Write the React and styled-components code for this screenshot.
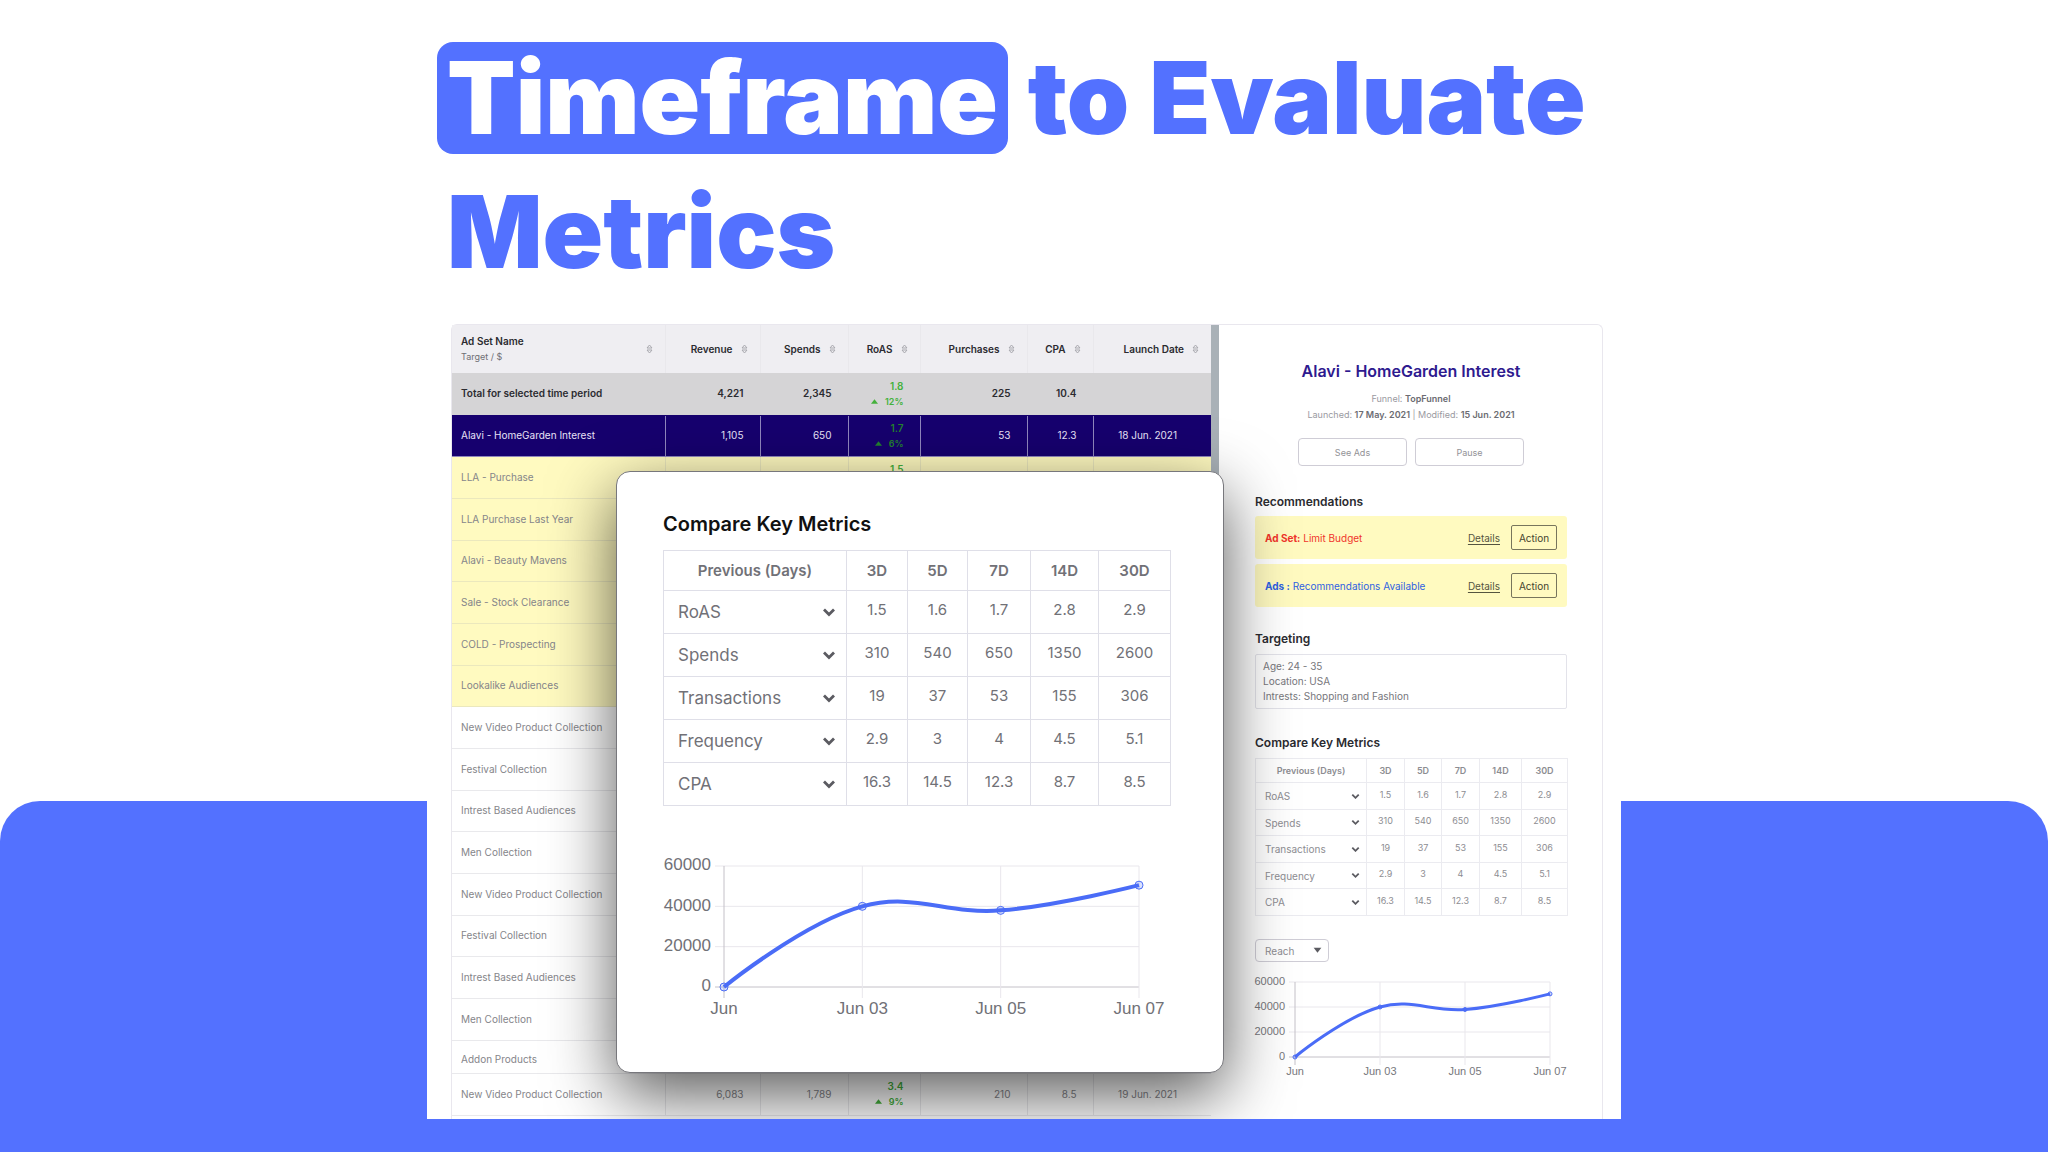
import React from 'react';
import styled, { createGlobalStyle, css } from 'styled-components';

const BLUE = '#5371ff';
const LINE = '#e3e3ea';

const COLUMNS = [
  { name: 'Revenue', width: 95 },
  { name: 'Spends', width: 88 },
  { name: 'RoAS', width: 72 },
  { name: 'Purchases', width: 107 },
  { name: 'CPA', width: 66 },
  { name: 'Launch Date', width: 118 }
];

const AD_SETS = [
  { name: 'LLA - Purchase', flagged: true, roas: '1.5', change: '5%' },
  { name: 'LLA Purchase Last Year', flagged: true },
  { name: 'Alavi - Beauty Mavens', flagged: true },
  { name: 'Sale - Stock Clearance', flagged: true },
  { name: 'COLD - Prospecting', flagged: true },
  { name: 'Lookalike Audiences', flagged: true },
  { name: 'New Video Product Collection' },
  { name: 'Festival Collection' },
  { name: 'Intrest Based Audiences' },
  { name: 'Men Collection' },
  { name: 'New Video Product Collection' },
  { name: 'Festival Collection' },
  { name: 'Intrest Based Audiences' },
  { name: 'Men Collection' }
];

const DAYS = ['3D', '5D', '7D', '14D', '30D'];
const METRICS = [
  { name: 'RoAS', values: ['1.5', '1.6', '1.7', '2.8', '2.9'] },
  { name: 'Spends', values: ['310', '540', '650', '1350', '2600'] },
  { name: 'Transactions', values: ['19', '37', '53', '155', '306'] },
  { name: 'Frequency', values: ['2.9', '3', '4', '4.5', '5.1'] },
  { name: 'CPA', values: ['16.3', '14.5', '12.3', '8.7', '8.5'] }
];

const REACH = [
  { label: 'Jun', value: 0 },
  { label: 'Jun 03', value: 40000 },
  { label: 'Jun 05', value: 38000 },
  { label: 'Jun 07', value: 50500 }
];
const TICKS = [60000, 40000, 20000, 0];

const GlobalStyle = createGlobalStyle`
  *, *::before, *::after { box-sizing: border-box; }
  body {
    margin: 0;
    background: #fff;
    font-family: Inter, "Liberation Sans", sans-serif;
  }
  button, select { font-family: inherit; }
`;

const Page = styled.main`
  display: grid;
  min-height: 100vh;
`;

const Band = styled.div`
  grid-area: 1 / 1;
  align-self: end;
  height: 351px;
  border-radius: 40px 40px 0 0;
  background: ${BLUE};
`;

const Slide = styled.section`
  grid-area: 1 / 1;
  justify-self: center;
  display: flex;
  flex-direction: column;
  width: 100%;
  max-width: 1194px;
  margin-bottom: 33px;
  padding: 31px 18px 0 24px;
  background: #fff;
`;

const Heading = styled.h1`
  margin: 0 0 25px -4px;
  color: ${BLUE};
  font-size: 100px;
  font-weight: 900;
  line-height: 134px;
`;

const Highlight = styled.span`
  display: inline-block;
  margin-left: -10px;
  padding: 0 10px;
  border-radius: 16px;
  background: ${BLUE};
  color: #fff;
  line-height: 112px;
`;

const Frame = styled.div`
  position: relative;
  flex: 1;
  display: flex;
  border: 1px solid #e9e7ee;
  border-bottom: 0;
  border-radius: 6px 6px 0 0;
`;

// the popup shadow runs past the frame, so clipping happens here
const Stage = styled.div`
  flex: 1;
  display: flex;
  margin: 0 -18px 0 -24px;
  padding: 0 18px 0 24px;
  overflow: hidden;
`;

const AdTable = styled.table`
  flex: 1;
  align-self: flex-start;
  table-layout: fixed;
  width: 0;
  border-collapse: collapse;
  color: #85858a;
  font-size: 10px;
  line-height: 15px;
`;

const HeadCell = styled.th`
  height: 48px;
  padding: 0 12px 0 9px;
  border-right: 1px solid #e9e8ec;
  background: #efeef2;
  color: #2b2b30;
  font-weight: 600;
  text-align: left;

  &:last-child { border-right: 0; }
`;

const HeadInner = styled.div`
  display: flex;
  align-items: center;
  justify-content: ${p => p.$spread ? 'space-between' : 'flex-end'};
  gap: 8px;
`;

const Target = styled.div`
  color: #6f6f75;
  font-size: 9px;
  font-weight: 400;
`;

const rowTones = {
  total: css`
    background: #d5d4d6;
    color: #2b2b30;
    font-weight: 600;
  `,
  selected: css`
    background: #16006e;
    color: #e6e2f6;
    --line: #8f86bd;
  `,
  flagged: css`
    background: #fffac0;
    --line: #ebe8bd;
  `,
  plain: css`
    background: #fff;
    --line: #e9e9ec;
  `
};

const AdRow = styled.tr`
  --line: transparent;
  height: ${p => p.$height}px;
  ${p => rowTones[p.$tone]}
`;

const AdCell = styled.td`
  padding: ${p => p.$low ? '6px' : '0'} ${p => p.$date ? '34px' : '16px'} 0 9px;
  border-right: 1px solid var(--line);
  border-bottom: 1px solid var(--line);
  text-align: ${p => p.$name ? 'left' : 'right'};
  white-space: nowrap;

  &:last-child { border-right: 0; }
`;

const Roas = styled.div`
  color: ${p => p.$dim ? '#23802f' : '#44b13c'};
  font-weight: 600;
`;

const Change = styled.div`
  display: flex;
  align-items: center;
  justify-content: flex-end;
  gap: 7px;
  font-size: 9px;
`;

const Divider = styled.div`
  flex: none;
  width: 8px;
  margin-bottom: 52px;
  background: #a9b1b7;
`;

const Sidebar = styled.aside`
  flex: none;
  display: flex;
  flex-direction: column;
  width: 383px;
  padding: 34px 35px 0 36px;
`;

const AdTitle = styled.h2`
  margin: 0;
  color: #2e1a8f;
  font-size: 16px;
  font-weight: 600;
  line-height: 24px;
  text-align: center;
`;

const Meta = styled.p`
  margin: ${p => p.$first ? '8px' : '0'} 0 0;
  color: #9a9a9f;
  font-size: 9px;
  line-height: 16px;
  text-align: center;

  b { color: #6c6c72; font-weight: 600; }
`;

const ButtonRow = styled.div`
  display: flex;
  gap: 8px;
  margin: 15px 43px 0;
`;

const GhostButton = styled.button`
  flex: 1;
  height: 28px;
  border: 1px solid #cfcdd6;
  border-radius: 4px;
  background: #fff;
  color: #929297;
  font-size: 9px;
`;

const SideTitle = styled.h3`
  margin: ${p => p.$gap}px 0 0;
  color: #2b2b30;
  font-size: 12px;
  font-weight: 600;
  line-height: 16px;
`;

const Recommendation = styled.div`
  display: flex;
  align-items: center;
  height: 43px;
  margin-top: ${p => p.$first ? '6px' : '5px'};
  padding: 0 10px;
  border-radius: 3px;
  background: #fffac0;
  color: ${p => p.$color};
  font-size: 10px;
`;

const Advice = styled.span`
  flex: 1;
`;

const DetailsLink = styled.a`
  margin-right: 11px;
  color: #55543f;
  font-size: 10px;
  text-underline-offset: 2px;
`;

const ActionButton = styled.button`
  width: 46px;
  height: 25px;
  padding: 0;
  border: 1px solid #77755c;
  border-radius: 2px;
  background: transparent;
  color: #45442f;
  font-size: 10px;
`;

const TargetBox = styled.div`
  margin-top: 7px;
  padding: 4px 7px;
  border: 1px solid ${LINE};
  border-radius: 2px;
  color: #77777c;
  font-size: 10px;
  line-height: 15px;
`;

const MetricGrid = styled.table`
  table-layout: fixed;
  width: 100%;
  margin-top: ${p => p.$large ? '13px' : '7px'};
  border-collapse: collapse;
  color: ${p => p.$large ? '#717177' : '#8d8d92'};
  font-size: ${p => p.$large ? '15px' : '9px'};

  th, td {
    height: ${p => p.$large ? '43px' : '26px'};
    padding: 0;
    border: 1px solid ${p => p.$large ? '#dfdfe8' : '#ebebf0'};
    text-align: center;
  }
  tbody tr:nth-child(odd) > * { height: ${p => p.$large ? '43px' : '27px'}; }
  thead th { height: ${p => p.$large ? '40px' : '24px'}; font-weight: 600; }
  td { padding-bottom: ${p => p.$large ? '6px' : '4px'}; }
`;

const MetricPicker = styled.label`
  display: grid;
  align-items: center;

  > * { grid-area: 1 / 1; }
  svg {
    justify-self: end;
    width: ${p => p.$large ? '14px' : '9px'};
    margin-right: ${p => p.$large ? '10px' : '6px'};
    color: #5b5b61;
    pointer-events: none;
  }
`;

const Select = styled.select`
  appearance: none;
  width: 100%;
  padding: 0 0 0 ${p => p.$large ? '14px' : '9px'};
  border: 0;
  background: transparent;
  color: ${p => p.$large ? '#717177' : '#8d8d92'};
  font-size: ${p => p.$large ? '17px' : '10px'};
`;

const ReachPicker = styled(MetricPicker)`
  width: 74px;
  height: 23px;
  margin-top: 23px;
  border: 1px solid #cfcdd6;
  border-radius: 4px;
`;

const ChartSvg = styled.svg`
  display: block;
  width: 100%;
  overflow: visible;
  font-family: "Liberation Sans", Arial, sans-serif;
`;

const SideChart = styled.div`
  margin-top: 10px;
`;

const Popup = styled.section`
  position: absolute;
  top: 146px;
  left: 164px;
  width: 608px;
  height: 602px;
  padding: 39px 53px 0 46px;
  border: 1px solid #77777c;
  border-radius: 14px;
  background: #fff;
  box-shadow: 0 22px 66px rgba(0, 0, 0, 0.65);
`;

const PopupTitle = styled.h2`
  margin: 0;
  color: #111;
  font-size: 20px;
  font-weight: 600;
  line-height: 26px;
`;

const PopupChart = styled.div`
  margin-top: 50px;
`;

const SortIcon = () => (
  <svg width="7" height="10" viewBox="0 0 7 10" fill="none" stroke="#a9a9af" aria-hidden="true">
    <path d="M1 4 3.500 1 6 4ZM1 6 3.500 9 6 6Z" />
  </svg>
);

const Chevron = () => (
  <svg viewBox="0 0 14 10" fill="none" stroke="currentColor" strokeWidth="2.800" aria-hidden="true">
    <path d="M2 2.500 7 7.500 12 2.500" />
  </svg>
);

const Caret = () => (
  <svg viewBox="0 0 14 10" fill="currentColor" aria-hidden="true">
    <path d="M1 1h12L7 9Z" />
  </svg>
);

const RoasValue = ({ value, change, dim }) => (
  <Roas $dim={dim}>
    {value}
    <Change>
      <svg width="7" height="5" viewBox="0 0 6 4" fill="currentColor" aria-hidden="true">
        <path d="M3 0 6 4H0Z" />
      </svg>
      {change}
    </Change>
  </Roas>
);

// Smooth line through the points, control points weighted by neighbour distance.
const smoothPath = (points, tension = 0.4) => {
  const controls = points.map((p, i) => {
    const prev = points[i - 1] || p;
    const next = points[i + 1] || p;
    const before = Math.hypot(p.x - prev.x, p.y - prev.y);
    const after = Math.hypot(next.x - p.x, next.y - p.y);
    const edge = i === 0 || i === points.length - 1;
    const fa = edge ? 0 : tension * before / (before + after);
    const fb = edge ? 0 : tension * after / (before + after);
    return {
      inX: p.x - fa * (next.x - prev.x),
      inY: p.y - fa * (next.y - prev.y),
      outX: p.x + fb * (next.x - prev.x),
      outY: p.y + fb * (next.y - prev.y)
    };
  });
  return points.slice(1).reduce((d, p, i) => {
    const from = controls[i], to = controls[i + 1];
    return `${d} C${from.outX} ${from.outY} ${to.inX} ${to.inY} ${p.x} ${p.y}`;
  }, `M${points[0].x} ${points[0].y}`);
};

const Chart = ({ width, left, plotWidth, plotHeight, fontSize, radius, stroke, color }) => {
  const top = 10;
  const bottom = top + plotHeight;
  const right = left + plotWidth;
  const tick = Math.round(fontSize / 2);
  const yOf = value => bottom - value / 60000 * plotHeight;
  const points = REACH.map((r, i) => ({
    ...r,
    x: left + i * plotWidth / (REACH.length - 1),
    y: yOf(r.value)
  }));

  return (
    <ChartSvg viewBox={`0 0 ${width} ${bottom + fontSize * 2}`} role="img" aria-label="Reach">
      {TICKS.map(t => (
        <g key={t}>
          <line
            x1={left - tick} x2={right}
            y1={yOf(t)} y2={yOf(t)}
            stroke={t ? '#e9e7ec' : '#c4c1c8'}
          />
          <text x={left - tick - 4} y={yOf(t) + fontSize / 4} fontSize={fontSize} fill={color} textAnchor="end">
            {t}
          </text>
        </g>
      ))}
      {points.map((p, i) => (
        <g key={p.label}>
          <line
            x1={p.x} x2={p.x}
            y1={top} y2={bottom + tick + 2}
            stroke={i ? '#e9e7ec' : '#c4c1c8'}
          />
          <text x={p.x} y={bottom + fontSize * 1.6} fontSize={fontSize} fill={color} textAnchor="middle">
            {p.label}
          </text>
        </g>
      ))}
      <path d={smoothPath(points)} fill="none" stroke="#4a6cf7" strokeWidth={stroke} />
      {points.map(p => (
        <circle
          key={p.label}
          cx={p.x} cy={p.y} r={radius}
          fill="#4a6cf7" fillOpacity=".2"
          stroke="#4a6cf7"
        />
      ))}
    </ChartSvg>
  );
};

const MetricTable = ({ large }) => (
  <MetricGrid $large={large}>
    <colgroup>
      {(large ? [183, 61, 60, 63, 68, 72] : [111, 38, 37, 38, 42, 46]).map((w, i) =>
        <col key={i} width={w} />
      )}
    </colgroup>
    <thead>
      <tr>
        <th scope="col">Previous (Days)</th>
        {DAYS.map(d => <th key={d} scope="col">{d}</th>)}
      </tr>
    </thead>
    <tbody>
      {METRICS.map(m => (
        <tr key={m.name}>
          <th scope="row">
            <MetricPicker $large={large}>
              <Select $large={large} aria-label={m.name} defaultValue={m.name}>
                {METRICS.map(o => <option key={o.name}>{o.name}</option>)}
              </Select>
              <Chevron />
            </MetricPicker>
          </th>
          {m.values.map((v, i) => <td key={i}>{v}</td>)}
        </tr>
      ))}
    </tbody>
  </MetricGrid>
);

const AdSetRow = ({ row, tone, height, low }) => (
  <AdRow $tone={tone} $height={height}>
    <AdCell $name $low={low}>{row.name}</AdCell>
    <AdCell>{row.revenue}</AdCell>
    <AdCell>{row.spends}</AdCell>
    <AdCell>
      {row.roas && <RoasValue value={row.roas} change={row.change} dim={tone === 'selected'} />}
    </AdCell>
    <AdCell>{row.purchases}</AdCell>
    <AdCell>{row.cpa}</AdCell>
    <AdCell $date>{row.launched}</AdCell>
  </AdRow>
);

const AdSets = () => (
  <AdTable>
    <colgroup>
      <col />
      {COLUMNS.map(c => <col key={c.name} width={c.width} />)}
    </colgroup>
    <thead>
      <tr>
        <HeadCell scope="col">
          <HeadInner $spread>
            <div>
              Ad Set Name
              <Target>Target / $</Target>
            </div>
            <SortIcon />
          </HeadInner>
        </HeadCell>
        {COLUMNS.map(c => (
          <HeadCell key={c.name} scope="col">
            <HeadInner>{c.name}<SortIcon /></HeadInner>
          </HeadCell>
        ))}
      </tr>
    </thead>
    <tbody>
      <AdSetRow
        tone="total"
        height={42}
        row={{
          name: 'Total for selected time period', revenue: '4,221', spends: '2,345',
          roas: '1.8', change: '12%', purchases: '225', cpa: '10.4'
        }}
      />
      <AdSetRow
        tone="selected"
        height={41}
        row={{
          name: 'Alavi - HomeGarden Interest', revenue: '1,105', spends: '650',
          roas: '1.7', change: '6%', purchases: '53', cpa: '12.3', launched: '18 Jun. 2021'
        }}
      />
      {AD_SETS.map((row, i) => (
        <AdSetRow
          key={i}
          row={row}
          tone={row.flagged ? 'flagged' : 'plain'}
          height={i % 3 === 2 ? 41 : 42}
        />
      ))}
      <AdSetRow tone="plain" height={33} low row={{ name: 'Addon Products' }} />
      <AdSetRow
        tone="plain"
        height={42}
        row={{
          name: 'New Video Product Collection', revenue: '6,083', spends: '1,789',
          roas: '3.4', change: '9%', purchases: '210', cpa: '8.5', launched: '19 Jun. 2021'
        }}
      />
    </tbody>
  </AdTable>
);

const Details = () => (
  <Sidebar>
    <AdTitle>Alavi - HomeGarden Interest</AdTitle>
    <Meta $first>Funnel: <b>TopFunnel</b></Meta>
    <Meta>Launched: <b>17 May. 2021</b> | Modified: <b>15 Jun. 2021</b></Meta>
    <ButtonRow>
      <GhostButton type="button">See Ads</GhostButton>
      <GhostButton type="button">Pause</GhostButton>
    </ButtonRow>

    <SideTitle $gap={28}>Recommendations</SideTitle>
    <Recommendation $first $color="#f0352b">
      <Advice><b>Ad Set:</b> Limit Budget</Advice>
      <DetailsLink href="#adset">Details</DetailsLink>
      <ActionButton type="button">Action</ActionButton>
    </Recommendation>
    <Recommendation $color="#2f62e0">
      <Advice><b>Ads :</b> Recommendations Available</Advice>
      <DetailsLink href="#ads">Details</DetailsLink>
      <ActionButton type="button">Action</ActionButton>
    </Recommendation>

    <SideTitle $gap={24}>Targeting</SideTitle>
    <TargetBox>
      <div>Age: 24 - 35</div>
      <div>Location: USA</div>
      <div>Intrests: Shopping and Fashion</div>
    </TargetBox>

    <SideTitle $gap={26}>Compare Key Metrics</SideTitle>
    <MetricTable />
    <ReachPicker>
      <Select aria-label="Metric" defaultValue="Reach">
        <option>Reach</option>
      </Select>
      <Caret />
    </ReachPicker>
    <SideChart>
      <Chart
        width={312} left={40} plotWidth={255} plotHeight={75}
        fontSize={11} radius={2} stroke={3} color="#77777c"
      />
    </SideChart>
  </Sidebar>
);

const App = () => (
  <>
    <GlobalStyle />
    <Page>
      <Band />
      <Slide>
        <Heading>
          <Highlight>Timeframe</Highlight> <span>to Evaluate</span> <span>Metrics</span>
        </Heading>
        <Stage>
          <Frame>
            <AdSets />
            <Divider />
            <Details />
            <Popup>
              <PopupTitle>Compare Key Metrics</PopupTitle>
              <MetricTable large />
              <PopupChart>
                <Chart
                  width={507} left={61} plotWidth={415} plotHeight={121}
                  fontSize={17} radius={4} stroke={4} color="#717177"
                />
              </PopupChart>
            </Popup>
          </Frame>
        </Stage>
      </Slide>
    </Page>
  </>
);

export default App;
